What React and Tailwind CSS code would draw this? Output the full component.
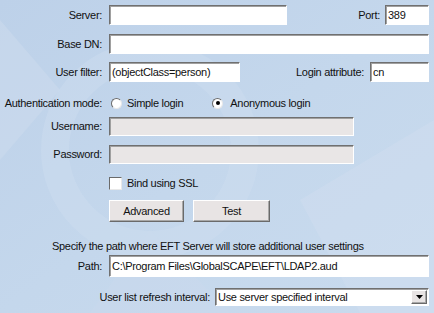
import React from 'react';

const sunken = "bg-white border border-t-[#707070] border-l-[#707070] border-b-white border-r-white shadow-[inset_1px_1px_0_#a0a0a0]";
const sunkenOff = "bg-[#e9e6e6] border border-t-[#707070] border-l-[#707070] border-b-white border-r-white shadow-[inset_1px_1px_0_#a0a0a0]";
const raised = "bg-[#e8e4e4] border border-t-white border-l-white border-b-[#6a6a6a] border-r-[#6a6a6a] shadow-[inset_-1px_-1px_0_#a8a8a8]";

function Field({ value = '', className = '', off = false }) {
  return (
    <div className={`${off ? sunkenOff : sunken} ${className} flex items-center pl-[2px] overflow-hidden whitespace-nowrap`}>
      {value}
    </div>
  );
}

function Label({ children }) {
  return <div className="w-[102px] mr-[7px] shrink-0 text-right whitespace-nowrap">{children}</div>;
}

function Radio({ checked }) {
  return (
    <span className="w-[11px] h-[11px] rounded-full bg-white border border-t-[#6b6b6b] border-l-[#6b6b6b] border-b-[#e8e8e8] border-r-[#e8e8e8] flex items-center justify-center shrink-0">
      {checked && <span className="w-[4px] h-[4px] rounded-full bg-black" />}
    </span>
  );
}

// faint watermark shapes behind the form
function Watermark() {
  return (
    <svg className="absolute inset-0 pointer-events-none" width="434" height="313" viewBox="0 0 434 313">
      <circle cx="150" cy="150" r="95" fill="none" stroke="#d0dfef" strokeWidth="28" opacity="0.4" />
      <path d="M0 20 L60 90 L0 160 Z" fill="#cddcee" opacity="0.5" />
      <path d="M300 200 L434 120 L434 313 L360 313 Z" fill="#d0def0" opacity="0.45" />
      <path d="M90 313 L150 230 L230 313 Z" fill="#c9daed" opacity="0.45" />
    </svg>
  );
}

export default function App() {
  return (
    <div className="relative w-[434px] h-[313px] overflow-hidden bg-gradient-to-br from-[#bdd1e9] via-[#c4d7ec] to-[#c9dbee] text-[11px] tracking-[-0.3px] leading-none text-[#111] font-['Liberation_Sans',Arial,sans-serif]">
      <Watermark />
      <div className="relative pr-[5px] pt-[5px]">
        {/* Server / Port */}
        <div className="flex items-center h-[20px]">
          <Label>Server:</Label>
          <Field className="w-[178px] h-full" />
          <div className="flex-1 text-right mr-[5px]">Port:</div>
          <Field className="w-[44px] h-full" value="389" />
        </div>

        <div className="flex items-center h-[20px] mt-[9px]">
          <Label>Base DN:</Label>
          <Field className="flex-1 h-full" />
        </div>

        <div className="flex items-center h-[20px] mt-[8px]">
          <Label>User filter:</Label>
          <Field className="w-[131px] h-full" value="(objectClass=person)" />
          <div className="flex-1 text-right mr-[6px]">Login attribute:</div>
          <Field className="w-[59px] h-full" value="cn" />
        </div>

        <div className="flex items-center h-[16px] mt-[13px]">
          <Label>Authentication mode:</Label>
          <div className="ml-[2px] flex items-center gap-[5px]">
            <Radio />
            <span>Simple login</span>
          </div>
          <div className="ml-[29px] flex items-center gap-[7px]">
            <Radio checked />
            <span>Anonymous login</span>
          </div>
        </div>

        <div className="flex items-center h-[19px] mt-[6px]">
          <Label>Username:</Label>
          <Field off className="w-[245px] h-full" />
        </div>

        <div className="flex items-center h-[19px] mt-[9px]">
          <Label>Password:</Label>
          <Field off className="w-[245px] h-full" />
        </div>

        <div className="flex items-center h-[13px] mt-[13px] pl-[109px] gap-[5px]">
          <span className="w-[13px] h-[13px] bg-white border border-t-[#6b6b6b] border-l-[#6b6b6b] border-b-[#e8e8e8] border-r-[#e8e8e8]" />
          <span>Bind using SSL</span>
        </div>

        <div className="flex items-center h-[22px] mt-[10px] pl-[109px] gap-[9px]">
          <button className={`${raised} w-[75px] h-full`}>Advanced</button>
          <button className={`${raised} w-[77px] h-full`}>Test</button>
        </div>

        <div className="h-[14px] mt-[17px] pl-[52px] flex items-center whitespace-nowrap">
          Specify the path where EFT Server will store additional user settings
        </div>

        <div className="flex items-center h-[22px] mt-[2px]">
          <Label>Path:</Label>
          <Field className="flex-1 h-full" value="C:\Program Files\GlobalSCAPE\EFT\LDAP2.aud" />
        </div>

        <div className="flex items-center h-[18px] mt-[11px]">
          <div className="flex-1 text-right mr-[5px] whitespace-nowrap">User list refresh interval:</div>
          <div className={`${sunken} w-[214px] h-full flex items-center justify-between pl-[2px] pr-[1px]`}>
            <span className="whitespace-nowrap">Use server specified interval</span>
            <span className={`${raised} w-[16px] h-[14px] flex items-center justify-center`}>
              <svg width="7" height="4" viewBox="0 0 7 4"><path d="M0 0h7L3.5 4z" fill="#000" /></svg>
            </span>
          </div>
        </div>
      </div>
    </div>
  );
}
